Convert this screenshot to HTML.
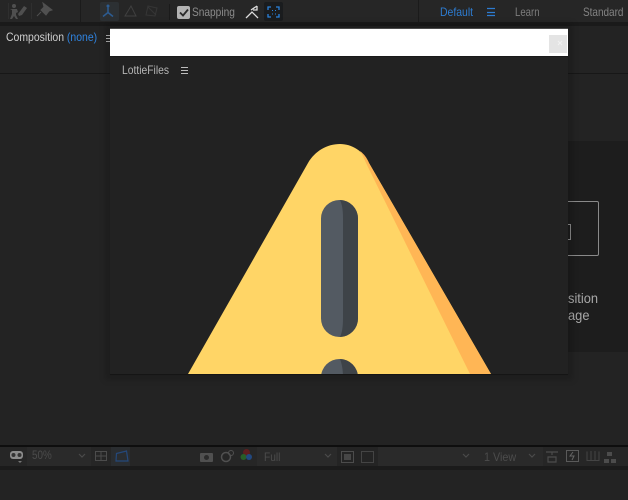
<!DOCTYPE html>
<html><head><meta charset="utf-8">
<style>
html,body{margin:0;padding:0;background:#232323}
#r{position:relative;width:628px;height:500px;overflow:hidden;background:#232323;font-family:"Liberation Sans",sans-serif}
.a{position:absolute}
.t{position:absolute;white-space:nowrap;font-size:12px;line-height:14px;transform-origin:0 50%}
svg{position:absolute;left:0;top:0}
</style></head><body>
<div id="r">
<div class="a" style="left:0;top:0;width:628px;height:22px;background:#262626"></div>
<div class="a" style="left:0;top:22px;width:628px;height:4px;background:#1a1a1a"></div>
<div class="a" style="left:0;top:73px;width:628px;height:1px;background:#171717"></div>
<div class="a" style="left:100px;top:2px;width:19px;height:19px;background:#2c3033;border-radius:2px"></div>
<div class="a" style="left:264px;top:2px;width:19px;height:19px;background:#1a1c1e;border-radius:2px"></div>
<div class="a" style="left:568px;top:141px;width:60px;height:211px;background:#1d1d1d"></div>
<div class="a" style="left:540px;top:201px;width:59px;height:55px;border:1px solid #8a8a8a;border-radius:2px;box-sizing:border-box"></div>
<div class="a" style="left:566px;top:224px;width:5px;height:16px;border:1px solid #8a8a8a;box-sizing:border-box"></div>
<div class="t" style="left:568px;top:290px;font-size:14px;line-height:16px;color:#a8a8a8;transform:scaleX(.92)">sition</div>
<div class="t" style="left:568px;top:307px;font-size:14px;line-height:16px;color:#a8a8a8;transform:scaleX(.92)">age</div>

<div class="a" style="left:177px;top:6px;width:13px;height:13px;background:#b4b4b4;border-radius:2px"></div>
<div class="t" style="left:192px;top:5px;color:#8c8c8c;transform:scaleX(.845)">Snapping</div>
<div class="t" style="left:440px;top:5px;color:#2d7cd1;transform:scaleX(.87)">Default</div>
<div class="t" style="left:515px;top:5px;color:#7d7d7d;transform:scaleX(.8)">Learn</div>
<div class="t" style="left:583px;top:5px;color:#838383;transform:scaleX(.83)">Standard</div>
<div class="t" style="left:6px;top:30px;color:#cfcfcf;transform:scaleX(.87)">Composition <span style="color:#2f83e0">(none)</span></div>

<svg width="628" height="500" viewBox="0 0 628 500" fill="none">
<path d="M8.500 3V19M31.500 3V19" stroke="#2f2f2f"/>
<path d="M80.500 0V22M169.500 4V20M418.500 0V22" stroke="#1b1b1b"/>
<g fill="#4f4f4f"><circle cx="14" cy="6" r="2"/><path d="M10 9h7l1 3-2 1v2l2 4h-2l-2-3-2 3h-2l2-5v-4z"/><path d="M18 14l6-8 3 2-5 7-3 1z"/></g>
<path d="M43 3l9 7-3 1-3 4-5-5 3-3zM41 12l-4 4" fill="#505050" stroke="#505050"/>
<path d="M108 7.500v5l-5 4m5-4l5 4" stroke="#2c5c92" stroke-width="1.500"/>
<circle cx="108" cy="6" r="1.500" fill="#2c5c92"/>
<path d="M131 6l-6 10h11z" stroke="#404040"/>
<path d="M148 6l9 2-2 8-9-1z M148 7l8 8" stroke="#363636"/>
<path d="M180 12.500l3 3 5-6" stroke="#2b2b2b" stroke-width="1.800"/>
<path d="M246 18l6-6 6 6M251 10l6-4M257 6v4h-4" stroke="#ddd" stroke-width="1.300"/>
<path d="M268 10V7h3M276 7h3v3M279 14v3h-3M271 17h-3v-3" stroke="#2b82dc" stroke-width="1.300"/>
<path d="M272 10.500h1M275 10.500h1M272 14h1M275 14h1" stroke="#2b82dc"/>
<path d="M487 8.500h8M487 12.500h8M487 15.500h8" stroke="#2d7cd1" stroke-width="1.300"/>
<path d="M106 35.500h7M106 38.500h7M106 41.500h7" stroke="#b5b5b5"/>
</svg>

<!-- bottom bar -->
<div class="a" style="left:0;top:445px;width:628px;height:2px;background:#0e0e0e"></div>
<div class="a" style="left:0;top:447px;width:628px;height:19px;background:#262626"></div>
<div class="a" style="left:0;top:466px;width:628px;height:4px;background:#1b1b1b"></div>
<div class="a" style="left:27px;top:447px;width:64px;height:19px;background:#2a2a2a"></div>
<div class="a" style="left:111px;top:447px;width:19px;height:19px;background:#2a2d30"></div>
<div class="a" style="left:257px;top:447px;width:80px;height:19px;background:#2a2a2a"></div>
<div class="a" style="left:337px;top:447px;width:41px;height:19px;background:#242424"></div>
<div class="a" style="left:378px;top:447px;width:100px;height:19px;background:#2a2a2a"></div>
<div class="a" style="left:477px;top:447px;width:66px;height:19px;background:#2a2a2a"></div>
<div class="t" style="left:32px;top:448px;color:#4c4c4c;transform:scaleX(.82)">50%</div>
<div class="t" style="left:264px;top:450px;color:#4c4c4c;transform:scaleX(.85)">Full</div>
<div class="t" style="left:484px;top:450px;color:#4c4c4c;transform:scaleX(.9)">1 View</div>
<svg width="628" height="500" viewBox="0 0 628 500" fill="none">
<path d="M79 454l3 3 3-3M325 454l3 3 3-3M463 454l3 3 3-3M529 454l3 3 3-3" stroke="#4a4a4a" stroke-width="1.200"/>
<rect x="10" y="451" width="13" height="8" rx="3" fill="#8c8c8c"/><circle cx="13.500" cy="455" r="2" fill="#333"/><circle cx="19.500" cy="455" r="2" fill="#333"/>
<path d="M18 461h4l-2 2z" fill="#777"/>
<rect x="95.500" y="451.500" width="11" height="9" stroke="#4c4c4c"/><path d="M101 451v9M95 456h12" stroke="#4c4c4c"/>
<path d="M116.500 453.500l10-2.500 1.500 10h-12z" stroke="#24487a" stroke-width="1.200"/>
<rect x="200" y="453" width="13" height="9" rx="1" fill="#505050"/><circle cx="206.500" cy="457.500" r="2.500" fill="#2b2b2b"/>
<circle cx="226" cy="457" r="4.500" stroke="#505050" stroke-width="1.500"/><circle cx="231" cy="453" r="2.500" stroke="#505050"/>
<circle cx="246.500" cy="452.500" r="3.500" fill="#5e1e1e"/><circle cx="243.500" cy="457" r="3" fill="#285e28"/><circle cx="249" cy="457" r="3" fill="#22487f"/>
<rect x="341.500" y="451.500" width="12" height="11" stroke="#4c4c4c"/><rect x="344" y="454" width="7" height="6" fill="#464646"/>
<rect x="361.500" y="451.500" width="12" height="11" stroke="#444"/>
<path d="M546 452h12M552 452v3M548 457h8v5h-8z" stroke="#4c4c4c" stroke-width="1.200"/>
<rect x="566.500" y="450.500" width="12" height="11" stroke="#5a5a5a"/><path d="M573 452l-3 4h4l-2 4" stroke="#666"/>
<path d="M587 451.500v9h12v-9M591 451v9M595 451v9" stroke="#444"/>
<path d="M607 452h5v4h-5zM604 459h5v4h-5zM611 459h5v4h-5z" fill="#4c4c4c"/>
</svg>

<!-- modal -->
<div class="a" style="left:105px;top:23px;width:468px;height:357px;background:rgba(0,0,0,.16);filter:blur(3px)"></div>
<div class="a" style="left:110px;top:28px;width:458px;height:346px;background:#222222;overflow:hidden">
  <div class="a" style="left:0;top:0;width:458px;height:1px;background:#4a4a4a"></div>
  <div class="a" style="left:0;top:1px;width:458px;height:27px;background:#fff"></div>
  <div class="a" style="left:0;top:28px;width:458px;height:1px;background:#1a1a1a"></div>
  <div class="a" style="left:439px;top:7px;width:18px;height:18px;background:#e4e4e4"></div>
  <div class="t" style="left:12px;top:35px;color:#b6b6b6;transform:scaleX(.86)">LottieFiles</div>
  <svg width="458" height="346" viewBox="110 28 458 346" fill="none">
    <path d="M558 41l4 4m0-4l-4 4" stroke="#f2f2f2"/>
    <path d="M181 67.500h7M181 70.500h7M181 73.500h7" stroke="#bdbdbd"/>
    <path d="M188 374L308 163C315 151 327 144 340 144C352 144 363 151 369 163L491 374Z" fill="#ffd566"/>
    <path d="M360 151C364 154 367 158 369 163L491 374H470L366 163C364 158 362 154 360 151Z" fill="#ffb655"/>
    <path d="M321 218.500a18.500 18.500 0 0 1 37 0V318.500a18.500 18.500 0 0 1-37 0Z" fill="#535a62"/>
    <path d="M340 200a18.500 18.500 0 0 1 18 18.500V318.500a18.500 18.500 0 0 1-18 18.500C342 333 343 327 343 318V218C343 210 342 204 340 200Z" fill="#3e4348"/>
    <circle cx="339.500" cy="377.500" r="18.500" fill="#535a62"/>
    <path d="M340 359a18.500 18.500 0 0 1 18 18.500H343C343 370 342 364 340 359Z" fill="#3e4348"/>
  </svg>
</div>
<div class="a" style="left:110px;top:374px;width:458px;height:1px;background:#151515"></div>
</div>
</body></html>
